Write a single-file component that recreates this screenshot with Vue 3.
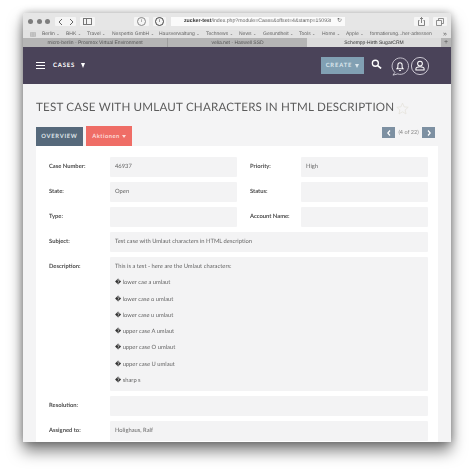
<script setup>
const bookmarks = [
  { t: 'Berlin', w: 24 }, { t: 'BHK', w: 21 }, { t: 'Travel', w: 25 }, { t: 'Nespertio GmbH', w: 47 },
  { t: 'Hausverwaltung', w: 47 }, { t: 'Technews', w: 33 }, { t: 'News', w: 24 }, { t: 'Gesundheit', w: 36 },
  { t: 'Tools', w: 23 }, { t: 'Home', w: 24 }, { t: 'Apple', w: 24 }
]
const descLines = ['lower cae a umlaut', 'lower case o umlaut', 'lower case u umlaut', 'upper case A umlaut', 'upper case O umlaut', 'upper case U umlaut', 'sharp s']
</script>

<template>
  <div class="page">
    <div class="window">
      <div class="toolbar">
        <div class="lights"><i></i><i></i><i></i></div>
        <div class="btn nav"><svg width="20" height="8" viewBox="0 0 20 8"><path d="M6 1 3 4l3 3M14 1l3 3-3 3" fill="none" stroke="#666" stroke-width="1"/></svg></div>
        <div class="btn side"><svg width="9" height="7" viewBox="0 0 9 7"><rect x=".5" y=".5" width="8" height="6" fill="none" stroke="#777"/><path d="M3.500 0v7" stroke="#777"/></svg></div>
        <div class="btn info first"><span class="ring">i</span></div>
        <div class="btn info second"><span class="ring dark">i</span></div>
        <div class="url"><span class="url-text"><b>zucker-test</b>/index.php?module=Cases&amp;offset=4&amp;stamp=15093t</span><span class="reload">↻</span></div>
        <div class="btn share"><svg width="7" height="9" viewBox="0 0 7 9"><path d="M1.500 3.500H.5v5h6v-5h-1M3.500 6V.5M2 2 3.500.5 5 2" fill="none" stroke="#666" stroke-width=".8"/></svg></div>
        <div class="btn tabs-btn"><svg width="8" height="8" viewBox="0 0 8 8"><path d="M.5 2.500h5v5h-5zM2.500 2.500v-2h5v5h-2" fill="none" stroke="#777" stroke-width=".8"/></svg></div>
      </div>
      <div class="bookmarks">
        <svg class="grid-ic" width="6" height="5" viewBox="0 0 7 6"><path d="M.5.500h6v5h-6zM.5 2.200h6M.5 3.800h6M2.500.5v5M4.500.5v5" fill="none" stroke="#999" stroke-width=".5"/></svg>
        <span v-for="b in bookmarks" :key="b.t" class="bm" :style="{ width: b.w + 'px' }">{{ b.t }} <em>⌄</em></span>
        <span class="bm">formatierung...her-adressen</span>
        <span class="more">»</span>
      </div>
      <div class="tabs">
        <div class="tab t1">micro-berlin - Proxmox Virtual Environment</div>
        <div class="tab t2">velia.net - Haswell SSD</div>
        <div class="tab t3">Schempp-Hirth SugarCRM</div>
        <div class="tab t4">+</div>
      </div>
      <header class="header">
        <div class="burger"><i></i><i></i><i></i></div>
        <span class="cases">CASES</span>
        <span class="caret"></span>
        <div class="spacer"></div>
        <div class="create">CREATE <span class="caret small"></span></div>
        <svg class="search" width="11" height="10" viewBox="0 0 14 13"><circle cx="5.500" cy="5.500" r="3.900" fill="none" stroke="#fff" stroke-width="1.700"/><path d="m8.500 8.500 4.500 3.700" stroke="#fff" stroke-width="2.200"/></svg>
        <svg class="round" width="18" height="19" viewBox="0 0 23 24"><path d="M5 19.500A10.500 10.500 0 1 1 8.500 21.500L2.500 23z" fill="none" stroke="#e4e2ea" stroke-width="1"/><path d="M7.500 15h8l-1.300-2v-3a2.700 2.700 0 0 0-5.400 0v3z" fill="none" stroke="#fff" stroke-width="1.300"/><path d="M10.300 17h2.400" stroke="#fff" stroke-width="1.300"/></svg>
        <svg class="round user" width="18" height="18" viewBox="0 0 22 22"><circle cx="11" cy="11" r="10.500" fill="none" stroke="#e4e2ea" stroke-width="1"/><circle cx="11" cy="8" r="2.900" fill="none" stroke="#fff" stroke-width="1.300"/><path d="M6 16v-1.500c0-1.500 2-2.500 5-2.500s5 1 5 2.500V16z" fill="none" stroke="#fff" stroke-width="1.300"/></svg>
      </header>
      <main class="content">
        <div class="title-row">
          <h1>TEST CASE WITH UMLAUT CHARACTERS IN HTML DESCRIPTION</h1>
          <svg width="13" height="13" viewBox="0 0 24 24"><path d="m12 2 3 7 7.500.7-5.700 4.900 1.700 7.400-6.500-3.900L5.500 22l1.700-7.400L1.500 9.700 9 9z" fill="none" stroke="#e6e4dc" stroke-width="1.500"/></svg>
        </div>
        <div class="action-row">
          <div class="overview">OVERVIEW</div>
          <div class="actions">Aktionen <span class="caret tiny"></span></div>
          <div class="spacer"></div>
          <div class="pager-wrap">
            <div class="pager"><svg width="4" height="6" viewBox="0 0 4 6"><path d="M3 .5.800 3 3 5.500" fill="none" stroke="#fff" stroke-width="1.200"/></svg></div>
            <span class="count">(4 of 22)</span>
            <div class="pager"><svg width="4" height="6" viewBox="0 0 4 6"><path d="M1 .5 3.200 3 1 5.500" fill="none" stroke="#fff" stroke-width="1.200"/></svg></div>
          </div>
        </div>
        <section class="card">
          <div class="row">
            <label>Case Number:</label><div class="field half">46937</div>
            <label class="right">Priority:</label><div class="field half">High</div>
          </div>
          <div class="row">
            <label>State:</label><div class="field half">Open</div>
            <label class="right">Status:</label><div class="field half"></div>
          </div>
          <div class="row">
            <label>Type:</label><div class="field half"></div>
            <label class="right">Account Name:</label><div class="field half"></div>
          </div>
          <div class="row">
            <label>Subject:</label><div class="field wide">Test case with Umlaut characters in HTML description</div>
          </div>
          <div class="row">
            <label>Description:</label>
            <div class="field wide desc">
              <p>This is a test - here are the Umlaut characters:</p>
              <p v-for="l in descLines" :key="l"><span class="rep">�</span> {{ l }}</p>
            </div>
          </div>
          <div class="row">
            <label>Resolution:</label><div class="field wide"></div>
          </div>
          <div class="row">
            <label>Assigned to:</label><div class="field wide">Holighaus, Ralf</div>
          </div>
        </section>
      </main>
    </div>
  </div>
</template>

<style>
html, body { margin: 0; background: #fff; overflow: hidden; }
</style>

<style scoped>
.page { width: 474px; height: 475px; padding: 13px 23px 0; box-sizing: border-box; overflow: hidden; font-family: Lato, "Liberation Sans", sans-serif; text-rendering: geometricPrecision; }
.window { width: 428px; height: 429px; overflow: hidden; border-radius: 3px 3px 0 0; box-shadow: 0 9px 15px rgba(0,0,0,.5), 0 0 8px rgba(0,0,0,.3); display: flex; flex-direction: column; background: #f4f4f5; filter: blur(.3px); }
.toolbar { height: 17px; background: #e6e6e6; display: flex; align-items: center; padding-left: 5px; flex: none; }
.lights { display: flex; gap: 3.500px; margin-right: 5px; }
.lights i { width: 5px; height: 5px; border-radius: 50%; background: #7d7d7d; }
.btn { height: 9px; background: #f5f5f5; border-radius: 1px; display: flex; align-items: center; justify-content: center; flex: none; }
.nav { width: 21px; margin-right: 4px; }
.side { width: 15px; margin-right: 39px; }
.info { width: 15px; }
.info.first { margin-right: 4px; }
.info.second { width: 13px; margin-right: 5px; }
.ring { width: 7px; height: 7px; border: 1px solid #888; border-radius: 50%; font-size: 5px; line-height: 7px; text-align: center; color: #666; font-family: "Liberation Sans", sans-serif; }
.ring.dark { border-color: #444; color: #333; }
.url { width: 174px; height: 9px; background: #fafafa; font-size: 5.200px; line-height: 9px; color: #666; padding-left: 13px; box-sizing: border-box; white-space: nowrap; display: flex; justify-content: space-between; padding-right: 3px; font-family: "Liberation Sans", sans-serif; flex: none; }
.url b { color: #333; }
.url-text { overflow: hidden; }
.reload { font-size: 6px; flex: none; }
.share { width: 15px; margin-right: 4px; margin-left: auto; }
.tabs-btn { width: 14px; margin-right: 4px; }
.bookmarks { height: 8px; flex: none; background: #e2e2e2; display: flex; align-items: center; padding-left: 7px; font-size: 5px; color: #666; white-space: nowrap; font-family: "Liberation Sans", sans-serif; overflow: hidden; }
.grid-ic { margin-right: 6px; flex: none; }
.bm { flex: none; }
.bm em { font-style: normal; font-size: 4px; }
.more { margin-left: auto; margin-right: 4px; font-size: 7px; }
.tabs { height: 9px; flex: none; display: flex; font-size: 5px; line-height: 10px; color: #555; text-align: center; font-family: "Liberation Sans", sans-serif; white-space: nowrap; }
.tab { overflow: hidden; box-sizing: border-box; }
.t1 { width: 145px; background: #b5b5b5; border-right: 1px solid #9e9e9e; }
.t2 { width: 139px; background: #b5b5b5; }
.t3 { flex: 1; background: #dcdcdc; color: #333; }
.t4 { width: 10px; background: #b5b5b5; font-size: 7px; flex: none; }
.header { height: 37px; flex: none; background: #4a4359; display: flex; align-items: center; padding-left: 13px; color: #fff; }
.burger { display: flex; flex-direction: column; gap: 2px; width: 9px; margin-right: 8px; }
.burger i { height: 1px; background: #fff; }
.cases { font-size: 6px; letter-spacing: .8px; width: 28px; font-weight: 700; }
.caret { width: 0; height: 0; border-left: 2.500px solid transparent; border-right: 2.500px solid transparent; border-top: 5px solid #fff; display: inline-block; }
.spacer { flex: 1; }
.create { width: 43px; height: 17px; background: #81a0b3; display: flex; align-items: center; justify-content: center; gap: 3px; font-size: 5.800px; letter-spacing: .9px; font-weight: 700; color: #dbe6ec; margin-right: 7px; box-sizing: border-box; white-space: nowrap; }
.caret.small { border-top-color: #dbe6ec; border-left-width: 2px; border-right-width: 2px; border-top-width: 4px; }
.search { margin-right: 9px; margin-top: -3px; }
.round { margin-right: 2px; margin-top: 1px; }
.round.user { margin-right: 22px; margin-top: 0; }
.content { flex: 1; padding: 0 13px; min-height: 0; }
.title-row { display: flex; align-items: center; gap: 2px; height: 12px; margin-top: 18px; }
h1 { margin: 0; font-size: 11.600px; font-weight: 400; letter-spacing: .2px; color: #5c5c5c; white-space: nowrap; line-height: 12px; }
.action-row { display: flex; align-items: flex-end; height: 20px; margin-top: 12px; }
.overview { width: 47px; height: 19px; background: #56697b; color: #dfe5ea; font-size: 5.800px; font-weight: 700; letter-spacing: .7px; display: flex; align-items: center; justify-content: center; margin-right: 3px; }
.actions { width: 46px; height: 20px; background: #ef6d66; color: #fcdcda; font-size: 5.800px; font-weight: 700; letter-spacing: .5px; display: flex; align-items: center; justify-content: center; gap: 2px; }
.caret.tiny { border-top-color: #fcdcda; border-left-width: 2px; border-right-width: 2px; border-top-width: 3px; }
.pager-wrap { display: flex; align-items: center; height: 11px; align-self: flex-start; margin: 1px 3px 0 0; }
.pager { width: 13px; height: 11px; background: #7d90a2; display: flex; align-items: center; justify-content: center; }
.count { font-size: 5.500px; color: #888; width: 27px; text-align: center; }
.card { background: #fff; padding: 11px 10px 0 13px; height: 296px; box-sizing: border-box; display: flex; flex-direction: column; gap: 5px; }
.row { display: flex; align-items: flex-start; }
label { width: 61px; flex: none; font-size: 5.800px; font-weight: 700; color: #4a4a4a; line-height: 19px; white-space: nowrap; }
label.right { width: 51px; margin-left: 13px; }
.field { background: #f3f3f4; font-size: 5.800px; color: #666; line-height: 20px; min-height: 20px; padding-left: 5px; box-sizing: border-box; white-space: nowrap; border-radius: 1px; flex: none; }
.half { width: 127px; }
.wide { width: 318px; }
.desc { height: 134px; padding-top: 2px; }
.desc p { margin: 0; height: 16.300px; line-height: 16.300px; }
.rep { color: #333; font-family: "DejaVu Sans", sans-serif; font-size: 6px; }
</style>
